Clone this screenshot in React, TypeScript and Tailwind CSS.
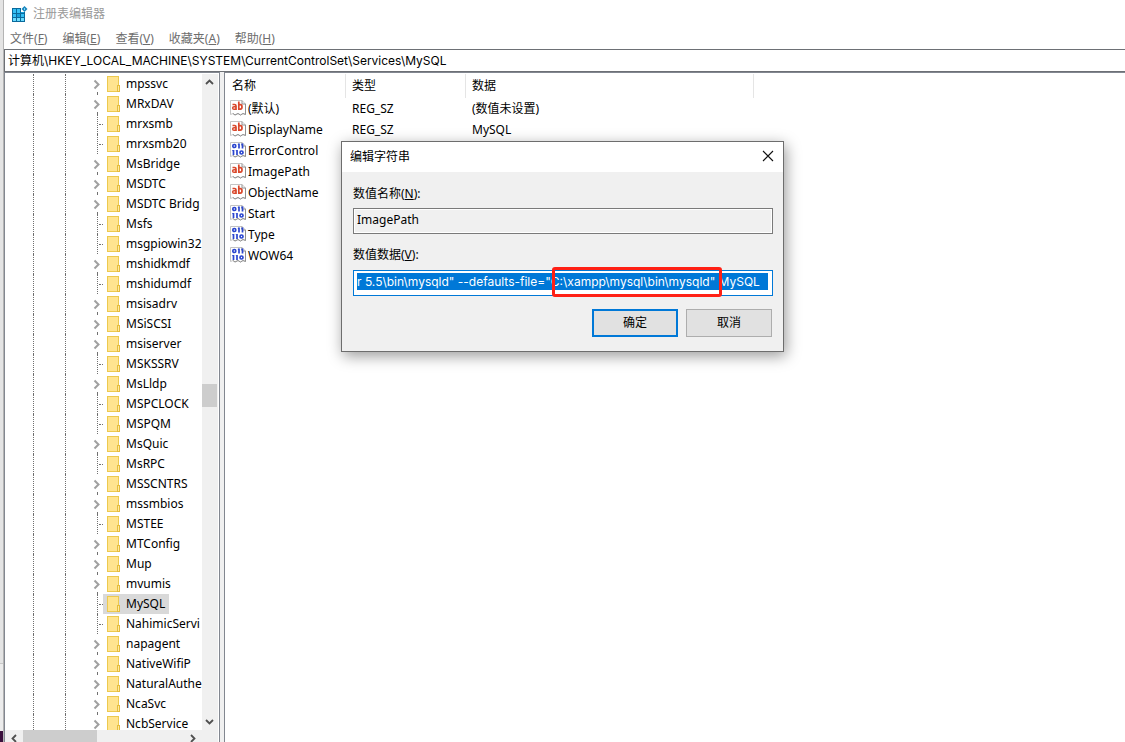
import React, { useState } from "react";

interface TreeKey {
  name: string;
  expandable: boolean;
}

interface RegistryValue {
  name: string;
  kind: "string" | "binary";
  type: string;
  data: string;
}

const leafKeys = [
  "mrxsmb",
  "mrxsmb20",
  "Msfs",
  "msgpiowin32",
  "mshidumdf",
  "MSKSSRV",
  "MSPCLOCK",
  "MSPQM",
  "MsRPC",
  "MSTEE",
  "MySQL",
  "NahimicServi",
];

const treeKeys: TreeKey[] = [
  "mpssvc",
  "MRxDAV",
  "mrxsmb",
  "mrxsmb20",
  "MsBridge",
  "MSDTC",
  "MSDTC Bridg",
  "Msfs",
  "msgpiowin32",
  "mshidkmdf",
  "mshidumdf",
  "msisadrv",
  "MSiSCSI",
  "msiserver",
  "MSKSSRV",
  "MsLldp",
  "MSPCLOCK",
  "MSPQM",
  "MsQuic",
  "MsRPC",
  "MSSCNTRS",
  "mssmbios",
  "MSTEE",
  "MTConfig",
  "Mup",
  "mvumis",
  "MySQL",
  "NahimicServi",
  "napagent",
  "NativeWifiP",
  "NaturalAuthe",
  "NcaSvc",
  "NcbService",
].map((name) => ({ name, expandable: !leafKeys.includes(name) }));

const values: RegistryValue[] = [
  { name: "(默认)", kind: "string", type: "REG_SZ", data: "(数值未设置)" },
  { name: "DisplayName", kind: "string", type: "REG_SZ", data: "MySQL" },
  { name: "ErrorControl", kind: "binary", type: "", data: "" },
  { name: "ImagePath", kind: "string", type: "", data: "" },
  { name: "ObjectName", kind: "string", type: "", data: "" },
  { name: "Start", kind: "binary", type: "", data: "" },
  { name: "Type", kind: "binary", type: "", data: "" },
  { name: "WOW64", kind: "binary", type: "", data: "" },
];

const menus = [
  { label: "文件", accessKey: "F" },
  { label: "编辑", accessKey: "E" },
  { label: "查看", accessKey: "V" },
  { label: "收藏夹", accessKey: "A" },
  { label: "帮助", accessKey: "H" },
];

function AppIcon() {
  return (
    <svg width="16" height="16" viewBox="0 0 16 16" shapeRendering="crispEdges">
      <rect x="0" y="2" width="13" height="14" fill="#0b6a9c" />
      <path d="M1 3h3v4h-3zM5 3h3v4h-3zM1 8h3v3h-3zM9 8h3v3h-3z" fill="#35c0f5" />
      <path d="M5 8h3v3h-3zM9 5h3v2h-3z" fill="#16a0dc" />
      <path d="M1 12h3v3h-3zM5 12h3v3h-3zM9 12h3v3h-3z" fill="#6bdcff" />
      <path d="M9 0H16V6H9z" fill="#fff" />
      <path d="M12.500 0L15.500 3L12.500 6L9.500 3z" fill="#1b86bd" shapeRendering="auto" />
      <rect x="12" y="2" width="1" height="2" fill="#7fd8fa" />
    </svg>
  );
}

function FolderIcon() {
  return (
    <svg width="13" height="16" viewBox="0 0 13 16" className="shrink-0">
      <rect x="0.500" y="0.500" width="11" height="15" fill="#ffe48f" stroke="#ecc94f" />
      <rect x="10.500" y="9.500" width="2" height="6" fill="#ffe9a2" stroke="#e5bd3c" />
    </svg>
  );
}

function ValueIcon({ kind }: { kind: "string" | "binary" }) {
  return (
    <svg width="16" height="17" viewBox="0 0 16 17" className="shrink-0">
      <path
        d="M0.500 0.500H12L15.500 4V14.500L13 13.500L10.500 15L8 13.500L5 15L3 13.500L0.500 14.500z"
        fill="#fff"
        stroke="#c4c4c4"
      />
      <path d="M12 0.500V4H15.500V14.500L13 13.500L10.500 15L8 13.500L5 15L3 13.500" fill="none" stroke="#909090" />
      {kind === "string" ? (
        <g fill="none" stroke="#d9472b" strokeWidth="1.700">
          <path d="M2.500 4.500H4.500Q6 4.500 6 6V10" />
          <path d="M6 6.800H4Q2.600 6.800 2.600 8Q2.600 9.200 4 9.200H6" strokeWidth="1.400" />
          <path d="M8.800 1.500V10M8.800 4.700H10.300Q12 4.700 12 7Q12 9.200 10.300 9.200H8.800" />
        </g>
      ) : (
        <g fill="none" stroke="#2b46cf" strokeWidth="1.700">
          <rect x="2.800" y="2.500" width="3" height="3" rx="1.400" />
          <path d="M9 1.500V6.500M12.500 1.500V6.500" />
          <path d="M7.800 2.300H9M11.300 2.300H12" strokeWidth="1" />
          <path d="M3.500 8V13M7 8V13" />
          <path d="M2.300 8.600H3M5.800 8.600H6.500" strokeWidth="1" />
          <rect x="10" y="9" width="3" height="3" rx="1.400" />
        </g>
      )}
    </svg>
  );
}

function Chevron({ direction }: { direction: "up" | "down" | "left" | "right" }) {
  const paths = {
    up: "M1 6L4.500 2.500L8 6",
    down: "M1 3L4.500 6.500L8 3",
    left: "M6 1L2.500 4.500L6 8",
    right: "M3 1L6.500 4.500L3 8",
  };
  return (
    <svg width="9" height="9" viewBox="0 0 9 9">
      <path d={paths[direction]} fill="none" stroke="#505050" strokeWidth="1.800" />
    </svg>
  );
}

function TreeRow({ item, selected }: { item: TreeKey; selected: boolean }) {
  return (
    <li className="flex h-5">
      <span className="ml-7 w-8 shrink-0 border-l border-dotted border-[#707070]" />
      <span className="w-7 shrink-0 border-l border-dotted border-[#707070]" />
      {item.expandable ? (
        <button
          aria-label={`展开 ${item.name}`}
          className="flex w-[10px] shrink-0 flex-col"
        >
          <svg width="8" height="18" viewBox="0 0 8 18">
            <path d="M1.500 6.500L5.500 10.500L1.500 14.500" fill="none" stroke="#a0a0a0" strokeWidth="2" />
          </svg>
          <span className="ml-1 h-[2px] border-l border-dotted border-[#707070]" />
        </button>
      ) : (
        <span className="ml-1 flex w-[6px] shrink-0 items-center border-l border-dotted border-[#707070]">
          <span className="ml-px w-[5px] border-t border-dotted border-[#707070]" />
        </span>
      )}
      <span
        className={`flex items-center gap-[6px] pr-1 pl-1 whitespace-nowrap ${
          selected ? "bg-[#d9d9d9]" : ""
        }`}
      >
        <FolderIcon />
        {item.name}
      </span>
    </li>
  );
}

function KeyTree() {
  return (
    <nav className="flex w-[216px] shrink-0 flex-col border-t border-r border-l border-[#828790] bg-white pt-px">
      <div className="flex min-h-0 flex-1">
        <ul className="min-w-0 flex-1 overflow-hidden">
          {treeKeys.map((item) => (
            <TreeRow key={item.name} item={item} selected={item.name === "MySQL"} />
          ))}
        </ul>
        <div className="mr-px flex w-4 shrink-0 flex-col bg-[#f0f0f0] pr-px">
          <button aria-label="向上滚动" className="flex h-[17px] w-full items-center justify-center">
            <Chevron direction="up" />
          </button>
          <div className="flex w-full flex-1 flex-col">
            <div className="flex-[293]" />
            <div className="h-[23px] bg-[#cdcdcd]" />
            <div className="flex-[307]" />
          </div>
          <button aria-label="向下滚动" className="flex h-[17px] w-full items-center justify-center">
            <Chevron direction="down" />
          </button>
        </div>
      </div>
      <div className="mr-px flex h-3 overflow-hidden bg-[#f0f0f0] pr-[17px] pl-px">
        <button aria-label="向左滚动" className="flex h-4 w-[17px] shrink-0 items-center justify-center">
          <Chevron direction="left" />
        </button>
        <div className="flex flex-1">
          <div className="w-[74px] bg-[#cdcdcd]" />
        </div>
        <button aria-label="向右滚动" className="flex h-4 w-[17px] shrink-0 items-center justify-center">
          <Chevron direction="right" />
        </button>
      </div>
    </nav>
  );
}

function ValueTable() {
  return (
    <main className="min-w-0 flex-1 border-t border-l border-[#828790] bg-white pt-px">
      <table className="w-[529px] table-fixed border-separate border-spacing-0 text-left">
        <thead>
          <tr className="h-6">
            <th className="w-[121px] border-r border-[#e5e5e5] pl-[7px] font-normal">名称</th>
            <th className="w-[120px] border-r border-[#e5e5e5] pl-[6px] font-normal">类型</th>
            <th className="border-r border-[#e5e5e5] pl-[6px] font-normal">数据</th>
          </tr>
        </thead>
        <tbody>
          {values.map((value) => (
            <tr key={value.name} className="h-[21px]">
              <td className="p-0">
                <span className="flex items-center gap-[2px] pl-[5px]">
                  <ValueIcon kind={value.kind} />
                  {value.name}
                </span>
              </td>
              <td className="p-0 pl-[6px]">{value.type}</td>
              <td className="p-0 pl-[6px]">{value.data}</td>
            </tr>
          ))}
        </tbody>
      </table>
    </main>
  );
}

function EditStringDialog() {
  const [data, setData] = useState(
    'r 5.5\\bin\\mysqld" --defaults-file="C:\\xampp\\mysql\\bin\\mysqld" MySQL'
  );

  return (
    <div
      role="dialog"
      aria-labelledby="dialog-title"
      className="absolute top-[141px] left-[341px] w-[443px] border border-[#6d6d6d] bg-[#f0f0f0] shadow-[2px_4px_14px_rgba(0,0,0,0.4)]"
    >
      <div className="flex h-[30px] items-center justify-between bg-white pr-[9px] pl-2">
        <h2 id="dialog-title">编辑字符串</h2>
        <button aria-label="关闭" className="pb-[2px]">
          <svg width="12" height="12" viewBox="0 0 12 12">
            <path d="M1 1L11 11M11 1L1 11" stroke="#111" strokeWidth="1.100" />
          </svg>
        </button>
      </div>

      <form className="pt-3 pr-[10px] pb-[14px] pl-[11px]" onSubmit={(e) => e.preventDefault()}>
        <label htmlFor="value-name" className="block h-6 leading-5">
          数值名称(<u>N</u>):
        </label>
        <input
          id="value-name"
          type="text"
          value="ImagePath"
          readOnly
          className="block h-[26px] w-full border border-[#7a7a7a] bg-[#f0f0f0] px-[3px] pb-1 ring-1 ring-white outline-none ring-inset"
        />

        <label htmlFor="value-data" className="mt-[11px] block h-[25px] leading-5">
          数值数据(<u>V</u>):
        </label>
        <div className="relative h-[26px] border border-[#0078d7] bg-white pt-[2px] pr-1 pl-[3px]">
          <input
            id="value-data"
            type="text"
            value={data}
            onChange={(e) => setData(e.target.value)}
            className="block h-[17px] w-full bg-[#0078d7] font-['Inter'] text-white outline-none"
          />
          <div className="pointer-events-none absolute -top-1 left-[198px] h-[30px] w-[170px] rounded-[3px] border-3 border-[#ff2015]" />
        </div>

        <div className="mt-[13px] flex justify-end gap-2 pr-px">
          <button type="submit" className="h-7 w-[86px] border-2 border-[#0078d7] bg-[#e1e1e1]">
            确定
          </button>
          <button type="button" className="h-7 w-[86px] border border-[#adadad] bg-[#e1e1e1]">
            取消
          </button>
        </div>
      </form>
    </div>
  );
}

export default function App() {
  return (
    <div className="relative flex h-screen overflow-hidden bg-white font-['Noto_Sans','Noto_Sans_CJK_SC',sans-serif] text-[12px] leading-4 text-black">
      {/* Sliver of the window behind */}
      <div className="flex w-1 shrink-0 flex-col border-r border-[#b4b4b4] bg-[#e4e4e4]">
        <div className="flex-1" />
        <div className="h-[68px] border-t border-[#c8c8c8] bg-[#ececec]" />
        <div className="h-[11px] bg-[#3a0f3c]" />
      </div>

      <div className="flex min-w-0 flex-1 flex-col">
        <header>
          <div className="flex h-7 items-center gap-[5px] pl-2 text-[#999999]">
            <AppIcon />
            <h1>注册表编辑器</h1>
          </div>
          <div className="flex h-[21px] items-center gap-[15px] pl-[6px] text-[#6d6d6d]">
            {menus.map((menu) => (
              <button key={menu.label}>
                {menu.label}(<u>{menu.accessKey}</u>)
              </button>
            ))}
          </div>
        </header>

        <input
          type="text"
          aria-label="地址"
          defaultValue="计算机\HKEY_LOCAL_MACHINE\SYSTEM\CurrentControlSet\Services\MySQL"
          className="h-[23px] w-full shrink-0 border border-r-0 border-[#6d7075] bg-white px-[3px] pb-[2px] font-['Inter','Noto_Sans_CJK_SC',sans-serif] outline-none"
        />

        <div className="flex min-h-0 flex-1 bg-[#f0f0f0]">
          <KeyTree />
          <div className="w-1 shrink-0" />
          <ValueTable />
        </div>
      </div>

      <EditStringDialog />
    </div>
  );
}
